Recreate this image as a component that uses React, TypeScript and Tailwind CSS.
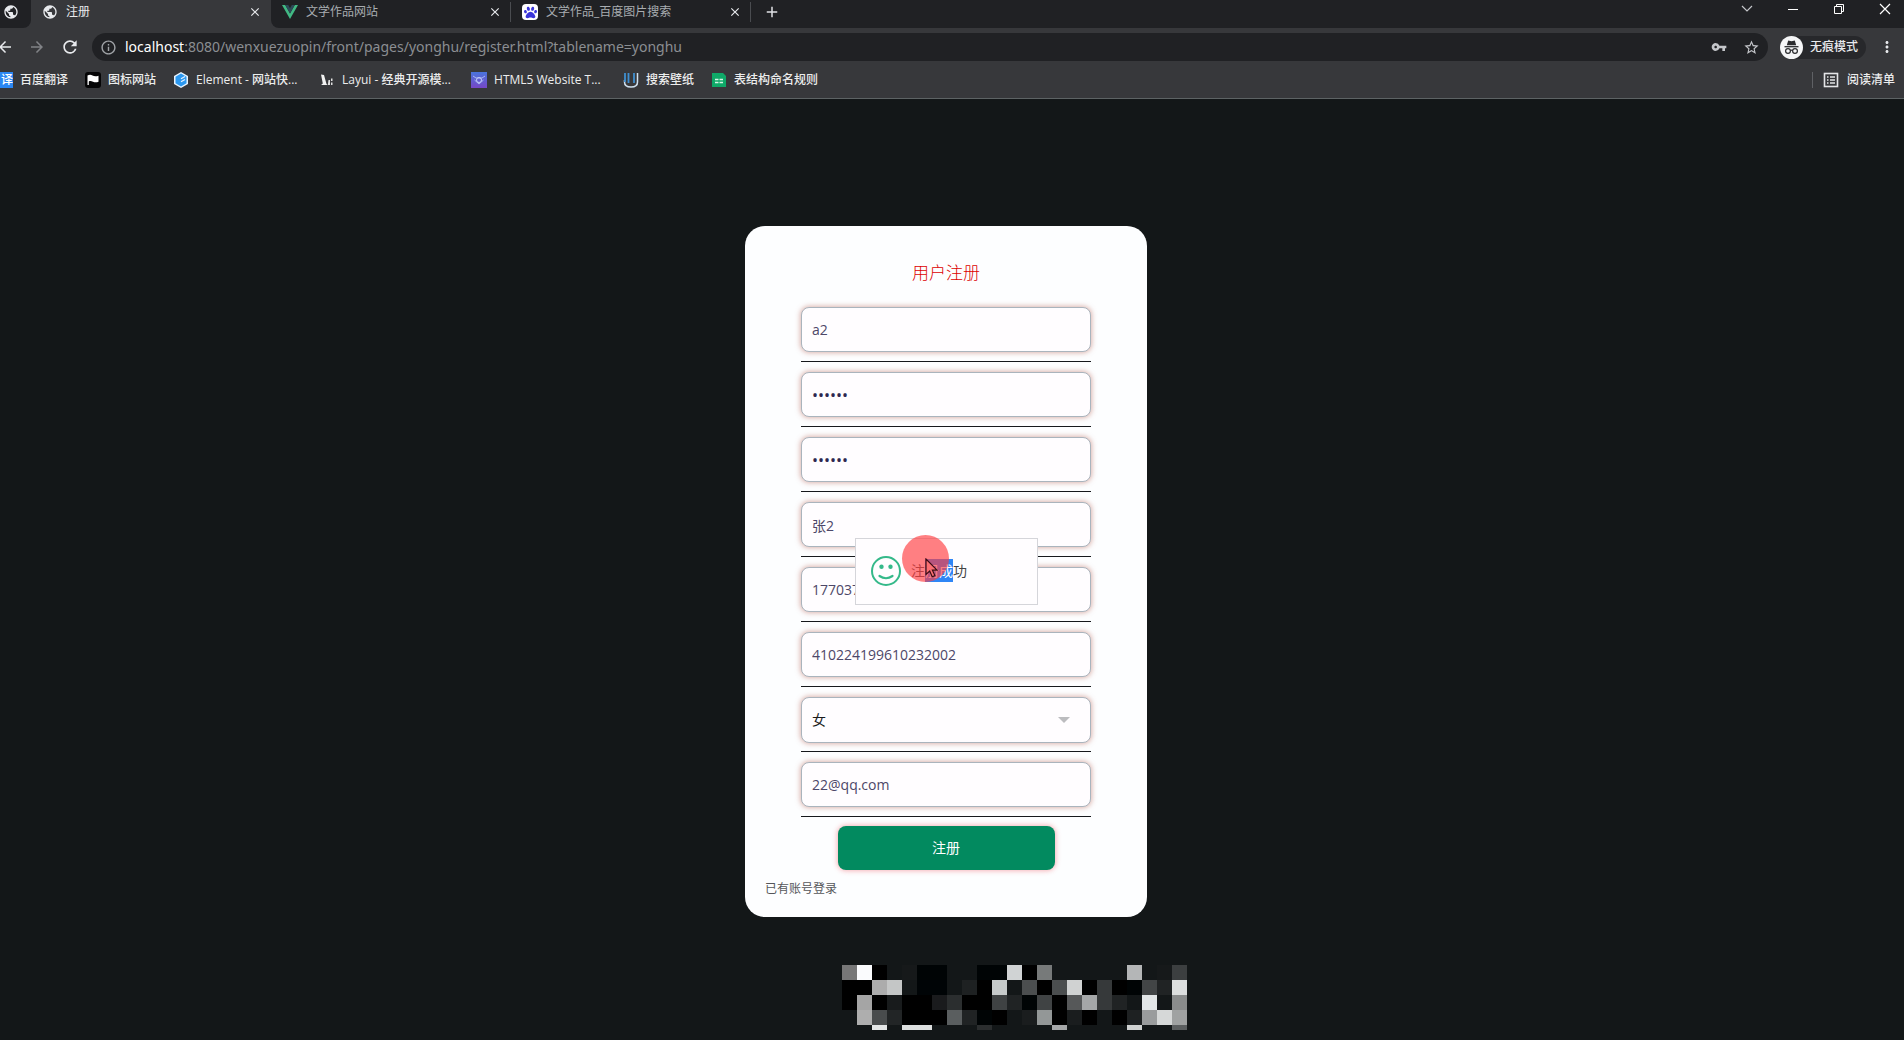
import React, { useState } from 'react';
import {
  MdAdd,
  MdArrowBack,
  MdArrowForward,
  MdClose,
  MdInfoOutline,
  MdMoreVert,
  MdPublic,
  MdRefresh,
  MdStarBorder,
  MdVpnKey,
} from 'react-icons/md';
import { FaPaw } from 'react-icons/fa';

type TabType = {
  title: string;
  icon: React.ReactNode;
  active?: boolean;
};

type BookmarkType = {
  title: string;
  icon: React.ReactNode;
  width: string;
};

type FieldType = {
  name: string;
  label: string;
  type: string;
  value: string;
};

const VueIcon = () => (
  <svg width="16" height="16" viewBox="0 0 16 16">
    <path d="M0 1h3.2L8 9.4 12.8 1H16L8 15z" fill="#41b883" />
    <path d="M3.2 1h3L8 4.2 9.8 1h3L8 9.4z" fill="#2c4a58" />
  </svg>
);

const BaiduIcon = () => (
  <span className="flex size-4 items-center justify-center rounded-sm bg-white text-[#3a35d8]">
    <FaPaw size={13} />
  </span>
);

const TranslateIcon = () => (
  <span className="flex h-4 w-[13px] items-center justify-end overflow-hidden bg-[#2b87f3] text-xs leading-4 text-white">
    译
  </span>
);

const FlagIcon = () => (
  <svg width="16" height="16" viewBox="0 0 16 16">
    <rect width="16" height="16" rx="3" fill="#050506" />
    <path d="M2.5 3.5c2-1 3.5-.8 5 0s3.500 1 6 .2v6c-2 .9-3.800.8-5.500 0S4.700 9 3.800 9.400V13H2.500z" fill="#fff" />
  </svg>
);

const ElementIcon = () => (
  <svg width="16" height="16" viewBox="0 0 16 16">
    <path d="M8 0l7 4v8l-7 4-7-4V4z" fill="#e8f4ff" />
    <path d="M8 1.500l5.500 3.200v6.600L8 14.500l-5.500-3.200V4.700z" fill="#2b98f0" />
    <path d="M8 6.800l4-2.300M8 9.800l4-2.300" stroke="#e8f4ff" strokeWidth="1.200" />
  </svg>
);

const LayuiIcon = () => (
  <svg width="16" height="16" viewBox="0 0 16 16">
    <path d="M2 2.500l3 .5L7.500 12l1 1H2l1.800-1.500z" fill="#f2f2f2" />
    <path d="M9.500 8h1.500v5H8.800zM12 6.500h1.500V9H12zM12 10.500h1.500V13H12z" fill="#e0e0e0" />
  </svg>
);

const HtmlIcon = () => (
  <svg width="16" height="16" viewBox="0 0 16 16">
    <defs>
      <linearGradient id="html-bg" x1="0" y1="0" x2="0" y2="1">
        <stop offset="0" stopColor="#4a74dc" />
        <stop offset="1" stopColor="#7647c6" />
      </linearGradient>
    </defs>
    <rect width="16" height="16" fill="url(#html-bg)" />
    <path d="M2 4l3 2h6l3-2M3.500 8l4.500 4 4.500-4" stroke="#a9b8f5" fill="none" />
    <circle cx="8" cy="8" r="2.500" fill="none" stroke="#c3cdfa" />
  </svg>
);

const WallpaperIcon = () => (
  <svg width="16" height="16" viewBox="0 0 16 16">
    <path d="M1.500 8v2c0 3 2.500 5 6.500 5s6.500-2 6.500-5V1" fill="none" stroke="#cfe0ee" strokeWidth="1.500" />
    <path d="M2 1v9M5.500 1v10M11 1v10" stroke="#3f8fd0" strokeWidth="1.800" />
  </svg>
);

const SheetIcon = () => (
  <svg width="16" height="16" viewBox="0 0 16 16">
    <path d="M1 1h11l3 3v11H1z" fill="#0fa968" />
    <path d="M4 7.500h3.500M8.500 7.500H12M4 10.500h3.500M8.500 10.500H12" stroke="#d6f5e6" strokeWidth="1.600" />
  </svg>
);

const IncognitoIcon = () => (
  <svg width="23" height="23" viewBox="0 0 23 23">
    <circle cx="11.500" cy="11.500" r="11.500" fill="#f5f6f7" />
    <path d="M8.200 4.500l3.300.7 3.300-.7 1.400 4.700H6.800z" fill="#2a2b2e" />
    <path d="M4.500 10.700h14" stroke="#2a2b2e" strokeWidth="1.300" />
    <circle cx="8" cy="15" r="2.400" fill="none" stroke="#2a2b2e" strokeWidth="1.200" />
    <circle cx="15" cy="15" r="2.400" fill="none" stroke="#2a2b2e" strokeWidth="1.200" />
    <path d="M10.400 14.600q1.100-.8 2.200 0" fill="none" stroke="#2a2b2e" strokeWidth="1.200" />
  </svg>
);

const ReadingListIcon = () => (
  <svg width="16" height="16" viewBox="0 0 16 16" fill="none" stroke="#e4e5e7">
    <rect x="1.500" y="1.500" width="13" height="13" strokeWidth="1.600" />
    <path d="M4 5h1.500M7 5h5M4 8h1.500M7 8h5M4 11h1.500M7 11h5" strokeWidth="1.400" />
  </svg>
);

const SmileIcon = () => (
  <svg width="30" height="30" viewBox="0 0 30 30">
    <circle cx="15" cy="15" r="14" fill="none" stroke="#35b98a" strokeWidth="2" />
    <circle cx="10.500" cy="10.800" r="2.200" fill="#35b98a" />
    <circle cx="19.500" cy="10.800" r="2.200" fill="#35b98a" />
    <path d="M8.500 20q6.500 4.500 13 0" fill="none" stroke="#35b98a" strokeWidth="2.200" strokeLinecap="round" />
  </svg>
);

const CursorIcon = () => (
  <svg width="14" height="20" viewBox="0 0 14 20">
    <path
      d="M1 1v15.500l3.700-3.400 2.500 5.700 2.700-1.200-2.500-5.500H12z"
      fill="#fb6f72"
      stroke="#3a0c14"
      strokeWidth="1.200"
    />
  </svg>
);

const tabs: TabType[] = [
  { title: '注册', icon: <MdPublic size={16} />, active: true },
  { title: '文学作品网站', icon: <VueIcon /> },
  { title: '文学作品_百度图片搜索', icon: <BaiduIcon /> },
];

const bookmarks: BookmarkType[] = [
  { title: '百度翻译', icon: <TranslateIcon />, width: '' },
  { title: '图标网站', icon: <FlagIcon />, width: '' },
  { title: 'Element - 网站快...', icon: <ElementIcon />, width: 'w-[129px]' },
  { title: 'Layui - 经典开源模...', icon: <LayuiIcon />, width: 'w-[135px]' },
  { title: 'HTML5 Website T...', icon: <HtmlIcon />, width: 'w-[135px]' },
  { title: '搜索壁纸', icon: <WallpaperIcon />, width: '' },
  { title: '表结构命名规则', icon: <SheetIcon />, width: '' },
];

const fields: FieldType[] = [
  { name: 'account', label: '账号', type: 'text', value: 'a2' },
  { name: 'password', label: '密码', type: 'password', value: '123456' },
  { name: 'password2', label: '确认密码', type: 'password', value: '123456' },
  { name: 'fullname', label: '姓名', type: 'text', value: '张2' },
  { name: 'phone', label: '手机号', type: 'text', value: '17703786901' },
  { name: 'idcard', label: '身份证号', type: 'text', value: '410224199610232002' },
  { name: 'gender', label: '性别', type: 'select', value: '女' },
  { name: 'email', label: '邮箱', type: 'text', value: '22@qq.com' },
];

// one row per line of 15px blocks, '' leaves the page showing
const mosaic = [
  ['#777', '#fafbfd', '#000', '', '#16191a', '#000405', '#000405', '', '', '#000405', '#000405', '#d0d3d4', '#000', '#777a7a', '', '', '', '', '', '#b4b6b7', '', '#16191a', '#3c3f40'],
  ['#000', '#000', '#acacac', '#c4c6c6', '', '#000406', '#000406', '', '#1e2122', '#000', '#c6caca', '', '#4b4e4f', '#000', '#4b4e4f', '#d0d2d2', '#000', '#36393a', '#000', '#000405', '#424546', '#202324', '#dcdede'],
  ['#000', '#a5a5a5', '#000', '#181b1c', '#000', '#000', '#1a1b1d', '#2b2e2f', '#000', '#000', '#3f4243', '#202324', '#000405', '#404344', '#000', '#565859', '#a5a7a8', '#36393a', '#202324', '', '#e2e6e7', '', '#8a8c8c'],
  ['', '#aeaeae', '#494c4d', '#222526', '#000', '#000', '#000', '#5a5e5f', '#202324', '#000405', '#000', '', '#1a1d1e', '#939797', '#000', '#1a1d1e', '#000', '', '#000', '#1e2122', '#9a9c9d', '#d6d8d8', '#a0a2a2'],
  ['', '', '#e4e6e6', '', '#dcdede', '#dcdede', '', '', '', '#2b2e2f', '', '', '', '', '#a5a7a8', '', '', '', '', '#d0d2d2', '', '', '#5c5f60'],
];

const Mosaic = () => (
  <svg width="345" height="65" viewBox="0 0 345 65" shapeRendering="crispEdges">
    {mosaic.map((row, y) =>
      row.map(
        (color, x) =>
          color && (
            <rect
              key={`${x}-${y}`}
              x={x * 15}
              y={y * 15}
              width="15"
              height="15"
              fill={color}
            />
          )
      )
    )}
  </svg>
);

const Tab = ({ tab }: { tab: TabType }) => (
  <div className="flex h-6 w-60 items-center gap-2 pl-[11px] pr-[9px] text-[#e8eaed]">
    {tab.icon}
    <span
      className={
        tab.active
          ? 'flex-1 truncate text-xs text-[#e8eaed]'
          : 'flex-1 truncate text-xs text-[#a9adb1]'
      }
    >
      {tab.title}
    </span>
    <button type="button" aria-label="关闭标签页">
      <MdClose size={14} />
    </button>
  </div>
);

const TabStrip = () => (
  <div className="flex h-7 overflow-hidden bg-[#37383b]">
    <div className="flex w-[31px] rounded-br-lg bg-[#202124] pl-[3px] pt-1 text-[#e8eaed]">
      <MdPublic size={16} />
    </div>
    <Tab tab={tabs[0]} />
    <div className="flex flex-1 rounded-bl-lg bg-[#202124]">
      <div className="flex h-6 items-center">
        {tabs.slice(1).map(t => (
          <div key={t.title} className="flex items-center">
            <Tab tab={t} />
            <span className="-ml-px h-5 w-px bg-[#4a4c50]" />
          </div>
        ))}
        <button
          type="button"
          aria-label="新标签页"
          className="ml-3 text-[#dfe1e5]"
        >
          <MdAdd size={18} />
        </button>
      </div>
      <div className="-mr-1 ml-auto flex h-[18px] text-white">
        <button
          type="button"
          aria-label="搜索标签页"
          className="flex w-[46px] items-center justify-center"
        >
          <svg width="12" height="8" viewBox="0 0 12 8" fill="none" stroke="#c4c6ca">
            <path d="M1 1l5 5 5-5" strokeWidth="1.200" />
          </svg>
        </button>
        <button
          type="button"
          aria-label="最小化"
          className="flex w-[46px] items-center justify-center"
        >
          <svg width="12" height="12" viewBox="0 0 12 12" stroke="currentColor">
            <path d="M1 6.500h10" />
          </svg>
        </button>
        <button
          type="button"
          aria-label="还原"
          className="flex w-[46px] items-center justify-center"
        >
          <svg width="12" height="12" viewBox="0 0 12 12" fill="none" stroke="currentColor">
            <path d="M1.500 3.500h7v7h-7zM3.500 3.500v-2h7v7h-2" />
          </svg>
        </button>
        <button
          type="button"
          aria-label="关闭"
          className="flex w-[46px] items-center justify-center"
        >
          <svg width="12" height="12" viewBox="0 0 12 12" stroke="currentColor">
            <path d="M1 1l10 10M11 1L1 11" strokeWidth="1.200" />
          </svg>
        </button>
      </div>
    </div>
  </div>
);

const Toolbar = () => (
  <div className="flex h-[38px] items-center overflow-hidden bg-[#37383b] text-[#e8eaed]">
    <div className="-ml-1 flex w-24 shrink-0 items-center gap-[14px]">
      <button type="button" aria-label="后退">
        <MdArrowBack size={18} />
      </button>
      <button type="button" aria-label="前进" className="text-[#818387]">
        <MdArrowForward size={18} />
      </button>
      <button type="button" aria-label="刷新">
        <MdRefresh size={20} />
      </button>
    </div>
    <div className="flex h-7 flex-1 items-center rounded-full bg-[#202124] px-2">
      <MdInfoOutline size={17} className="text-[#a0a3a7]" />
      <span className="ml-2 flex-1 font-['Noto_Sans',sans-serif] text-sm text-[#8b8e92]">
        <span className="text-white">localhost</span>
        :8080/wenxuezuopin/front/pages/yonghu/register.html?tablename=yonghu
      </span>
      <button type="button" aria-label="密码" className="text-[#c4c6ca]">
        <MdVpnKey size={16} />
      </button>
      <button type="button" aria-label="收藏" className="ml-4 text-[#c4c6ca]">
        <MdStarBorder size={17} />
      </button>
    </div>
    <div className="ml-3 flex h-[23px] w-[86px] items-center gap-[7px] rounded-full bg-[#27282b] text-xs font-medium">
      <IncognitoIcon />
      无痕模式
    </div>
    <button type="button" aria-label="菜单" className="ml-3 mr-2">
      <MdMoreVert size={18} />
    </button>
  </div>
);

const Bookmarks = () => (
  <div className="flex h-[33px] items-center gap-[17px] border-b border-[#5d6364] bg-[#37383b] pb-1 pr-[9px] text-xs font-medium text-[#eceded]">
    {bookmarks.map(b => (
      <a
        key={b.title}
        href="#"
        className={`flex shrink-0 items-center gap-[7px] whitespace-nowrap ${b.width}`}
      >
        {b.icon}
        {b.title}
      </a>
    ))}
    <a
      href="#"
      className="ml-auto flex h-4 items-center gap-2 border-l border-[#5f6165] pl-[10px]"
    >
      <ReadingListIcon />
      阅读清单
    </a>
  </div>
);

const inputStyle =
  'w-full rounded-lg border border-[#aab4bd] bg-[#fffdff] px-[10px] shadow-[0_0_5px_1px_rgba(190,110,95,0.5)] outline-none';

const Field = ({
  field,
  onChange,
}: {
  field: FieldType;
  onChange: (value: string) => void;
}) => {
  if (field.type === 'select') {
    return (
      <div className="grid items-center border-b border-[#16181c] pb-2 pt-[10px]">
        <select
          aria-label={field.label}
          value={field.value}
          onChange={e => onChange(e.target.value)}
          className={`${inputStyle} col-start-1 row-start-1 h-[46px] appearance-none text-sm text-[#1c1c1c]`}
        >
          <option>女</option>
          <option>男</option>
        </select>
        <svg
          width="12"
          height="6"
          viewBox="0 0 12 6"
          className="pointer-events-none col-start-1 row-start-1 mr-[21px] justify-self-end"
        >
          <path d="M0 0h12L6 6z" fill="#bcbcbf" />
        </svg>
      </div>
    );
  }
  return (
    <div className="border-b border-[#16181c] pb-[9px] pt-[10px]">
      <input
        aria-label={field.label}
        type={field.type}
        value={field.value}
        onChange={e => onChange(e.target.value)}
        className={`${inputStyle} block h-[45px] ${
          field.type === 'password'
            ? 'text-base text-[#2d2850]'
            : 'text-sm text-[#4d4768]'
        }`}
      />
    </div>
  );
};

const Message = () => (
  <div
    role="alert"
    className="absolute left-[110px] top-[312px] flex h-[67px] w-[183px] items-center gap-[10px] border border-[#d5d5da] bg-[#fffdff] pb-0.5 pl-[15px] text-sm text-[#444]"
  >
    <SmileIcon />
    <span>
      注<span className="bg-[#2f86f6] py-0.5 text-white">册成</span>功
    </span>
    <span className="absolute left-[46px] top-[-4px] size-[47px] rounded-full bg-[#ff3b3f]/65" />
    <span className="absolute left-[69px] top-[19px]">
      <CursorIcon />
    </span>
  </div>
);

const App = () => {
  const [data, setData] = useState<FieldType[]>(fields);

  const handleChange = (name: string, value: string) => {
    setData(data.map(f => (f.name === name ? { ...f, value } : f)));
  };

  return (
    <div className="flex min-h-screen flex-col bg-[#131718] font-['Open_Sans','Noto_Sans_CJK_SC',sans-serif]">
      <header>
        <TabStrip />
        <Toolbar />
        <Bookmarks />
      </header>
      <main className="relative flex-1 pr-3 pt-[127px]">
        <form
          className="relative mx-auto w-[402px] rounded-[20px] bg-[#fdfeff] px-5 pb-[18px] pt-[31px]"
          onSubmit={e => e.preventDefault()}
        >
          <h1 className="h-10 text-center text-[17px] font-light leading-8 text-[#dc0000]">
            用户注册
          </h1>
          <div className="px-9">
            {data.map(f => (
              <Field
                key={f.name}
                field={f}
                onChange={value => handleChange(f.name, value)}
              />
            ))}
            <button
              type="submit"
              className="mx-auto mt-[9px] block h-11 w-[217px] rounded-lg bg-[#028a5f] text-sm text-white shadow-[0_0_5px_1px_rgba(240,90,100,0.45)]"
            >
              注册
            </button>
          </div>
          <a href="#" className="mt-[9px] block text-xs leading-5 text-[#55565a]">
            已有账号登录
          </a>
          <Message />
        </form>
        <div className="absolute left-1/2 top-[866px] -ml-[110px]">
          <Mosaic />
        </div>
      </main>
    </div>
  );
};

export default App;
